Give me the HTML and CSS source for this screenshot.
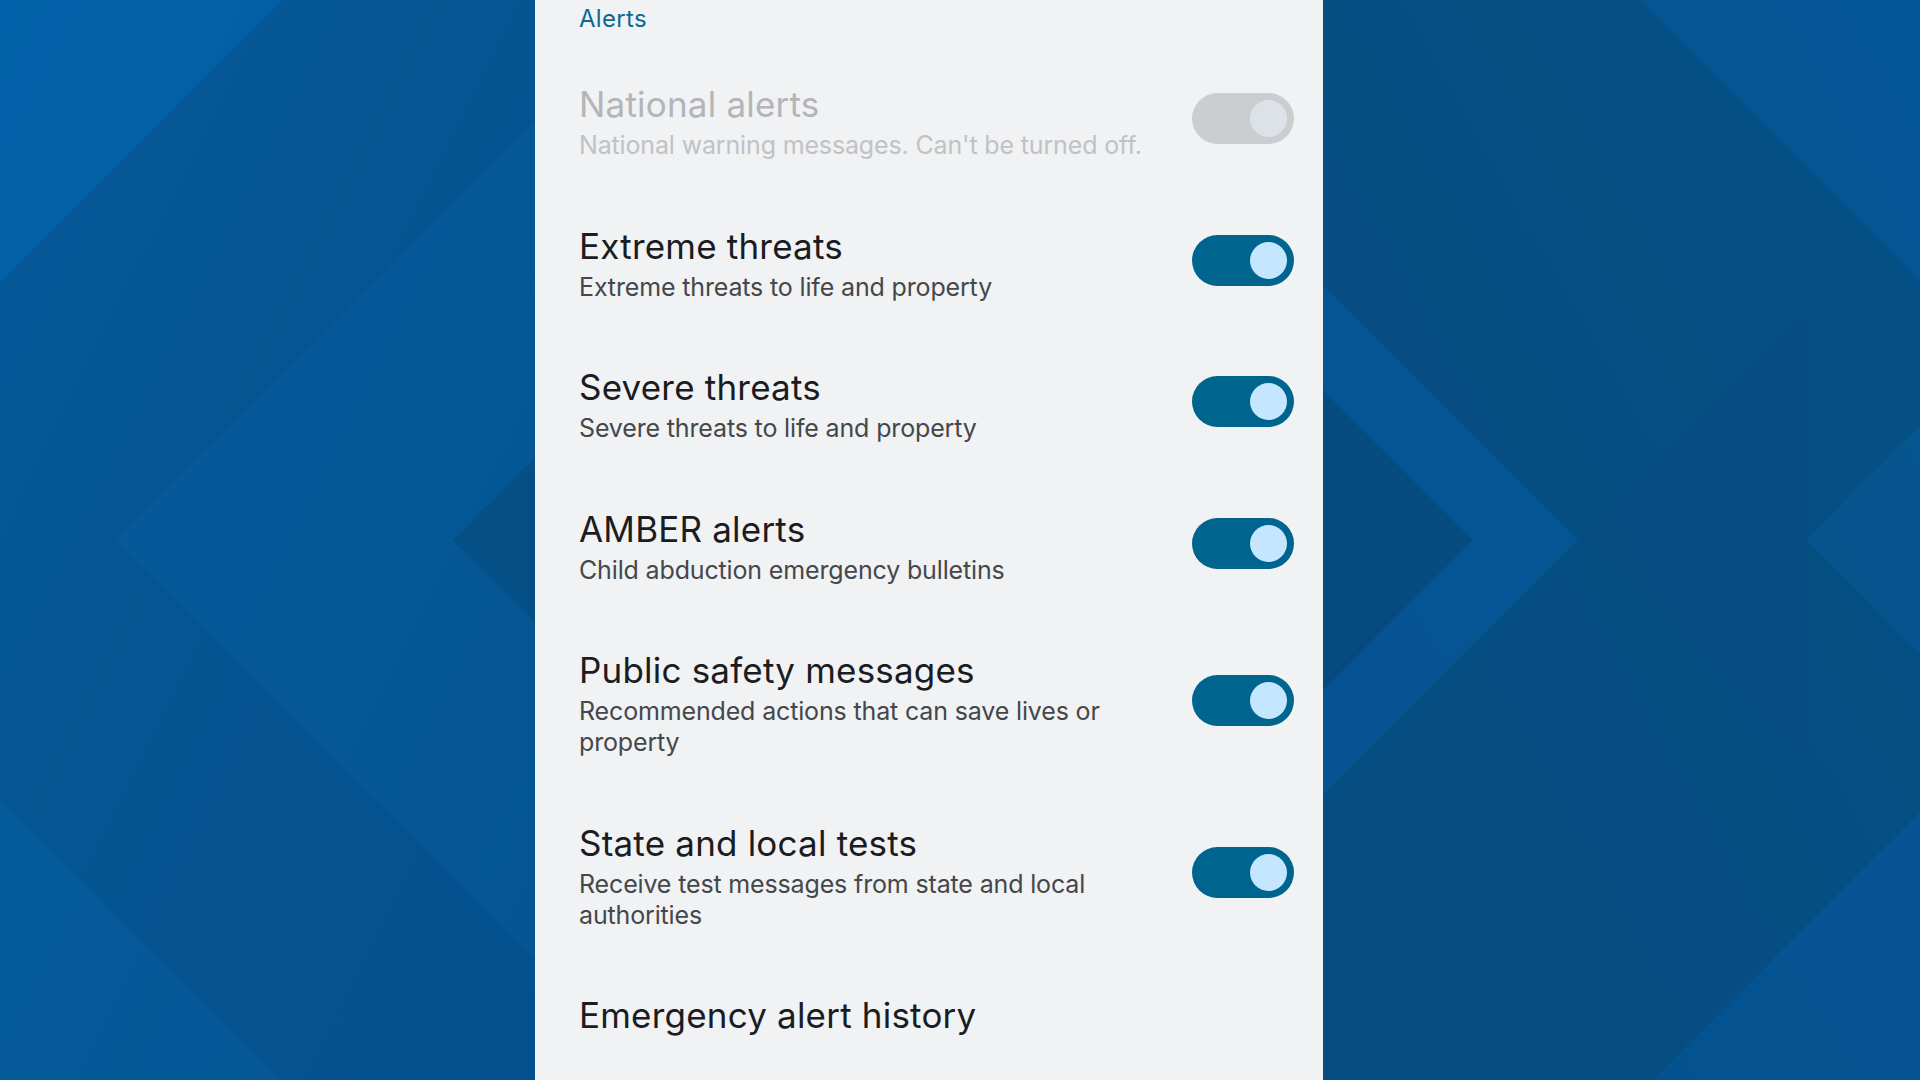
FILE: index.html
```html
<!DOCTYPE html>
<html lang="en">
<head>
<meta charset="utf-8">
<title>Emergency alerts</title>
<link rel="stylesheet" href="styles.css">
</head>
<body>
<div class="stage">
  <svg class="backdrop" viewBox="0 0 1920 1080" preserveAspectRatio="none" aria-hidden="true">
    <defs>
      <linearGradient id="shadeL" x1="0" y1="0" x2="1" y2="1">
        <stop offset="0" stop-color="#000" stop-opacity="0"/>
        <stop offset="1" stop-color="#00123a" stop-opacity="0.12"/>
      </linearGradient>
      <linearGradient id="shadeR" x1="1" y1="0" x2="0" y2="1">
        <stop offset="0" stop-color="#000" stop-opacity="0"/>
        <stop offset="1" stop-color="#00123a" stop-opacity="0.08"/>
      </linearGradient>
    </defs>
    <!-- left side -->
    <rect x="0" y="0" width="540" height="1080" fill="#05599a"/>
    <polygon points="0,0 282,0 0,282" fill="#0363aa"/>
    <polygon points="116,540 540,116 540,964" fill="#055d9f"/>
    <polygon points="453,540 540,453 540,627" fill="#04558f"/>
    <polygon points="0,800 280,1080 0,1080" fill="#055fa1"/>
    <rect x="0" y="0" width="540" height="1080" fill="url(#shadeL)"/>
    <!-- right side -->
    <rect x="1318" y="0" width="602" height="1080" fill="#055187"/>
    <polygon points="1318,280 1578,540 1318,800" fill="#055899"/>
    <polygon points="1318,385 1473,540 1318,695" fill="#054f85"/>
    <polygon points="1578,540 1806,312 1806,768" fill="#054f86"/>
    <polygon points="1806,540 1920,426 1920,654" fill="#055692"/>
    <polygon points="1640,0 1920,0 1920,280" fill="#055697"/>
    <polygon points="1652,1080 1920,812 1920,1080" fill="#055697"/>
    <rect x="1318" y="0" width="602" height="1080" fill="url(#shadeR)"/>
  </svg>

  <main class="panel">
    <div class="section-header">Alerts</div>

    <div class="row is-disabled">
      <div class="text">
        <div class="title">National alerts</div>
        <div class="summary">National warning messages. Can't be turned off.</div>
      </div>
      <span class="switch"><span class="knob"></span></span>
    </div>

    <div class="row">
      <div class="text">
        <div class="title">Extreme threats</div>
        <div class="summary">Extreme threats to life and property</div>
      </div>
      <span class="switch is-on"><span class="knob"></span></span>
    </div>

    <div class="row">
      <div class="text">
        <div class="title">Severe threats</div>
        <div class="summary">Severe threats to life and property</div>
      </div>
      <span class="switch is-on"><span class="knob"></span></span>
    </div>

    <div class="row">
      <div class="text">
        <div class="title">AMBER alerts</div>
        <div class="summary">Child abduction emergency bulletins</div>
      </div>
      <span class="switch is-on"><span class="knob"></span></span>
    </div>

    <div class="row">
      <div class="text">
        <div class="title">Public safety messages</div>
        <div class="summary">Recommended actions that can save lives or property</div>
      </div>
      <span class="switch is-on"><span class="knob"></span></span>
    </div>

    <div class="row">
      <div class="text">
        <div class="title">State and local tests</div>
        <div class="summary">Receive test messages from state and local authorities</div>
      </div>
      <span class="switch is-on"><span class="knob"></span></span>
    </div>

    <div class="row">
      <div class="text">
        <div class="title">Emergency alert history</div>
      </div>
    </div>
  </main>
</div>
</body>
</html>
```

FILE: styles.css
```css
* {
  box-sizing: border-box;
}

html, body {
  margin: 0;
  padding: 0;
  width: 1920px;
  height: 1080px;
  overflow: hidden;
}

body {
  font-family: "Inter", "Noto Sans", "Liberation Sans", sans-serif;
  background: #05558f;
}

.stage {
  position: relative;
  width: 1920px;
  height: 1080px;
  display: grid;
  grid-template-columns: 535px 788px 1fr;
  overflow: hidden;
}

.backdrop {
  position: absolute;
  inset: 0;
  width: 1920px;
  height: 1080px;
  z-index: 0;
}

.panel {
  grid-column: 2;
  position: relative;
  z-index: 1;
  background: #f0f2f4;
  height: 1080px;
  padding: 0 29px 0 44px;
  overflow: hidden;
}

.section-header {
  font-size: 24px;
  line-height: 32px;
  padding: 3px 0 15px;
  color: #0b6990;
  letter-spacing: 0.3px;
}

.row {
  display: flex;
  align-items: center;
  gap: 33px;
  padding: 30px 0 30.5px;
}

.text {
  flex: 1;
  min-width: 0;
}

.title {
  font-size: 35px;
  line-height: 48px;
  color: #1b1c1f;
  letter-spacing: 0.2px;
}

.summary {
  font-size: 25px;
  line-height: 31px;
  margin-top: 2px;
  color: #45474b;
  letter-spacing: -0.15px;
}

.is-disabled .title {
  color: #b3b5b8;
}

.is-disabled .summary {
  color: #c0c2c5;
}

.switch {
  flex: none;
  width: 102px;
  height: 51px;
  border-radius: 26px;
  padding: 7px;
  margin-bottom: 4px;
  display: flex;
  align-items: center;
  justify-content: flex-end;
  background: #cbced1;
}

.switch .knob {
  width: 37px;
  height: 37px;
  border-radius: 50%;
  background: #dde2e9;
}

.switch.is-on {
  background: #00658e;
}

.switch.is-on .knob {
  background: #c4e6ff;
}
```
